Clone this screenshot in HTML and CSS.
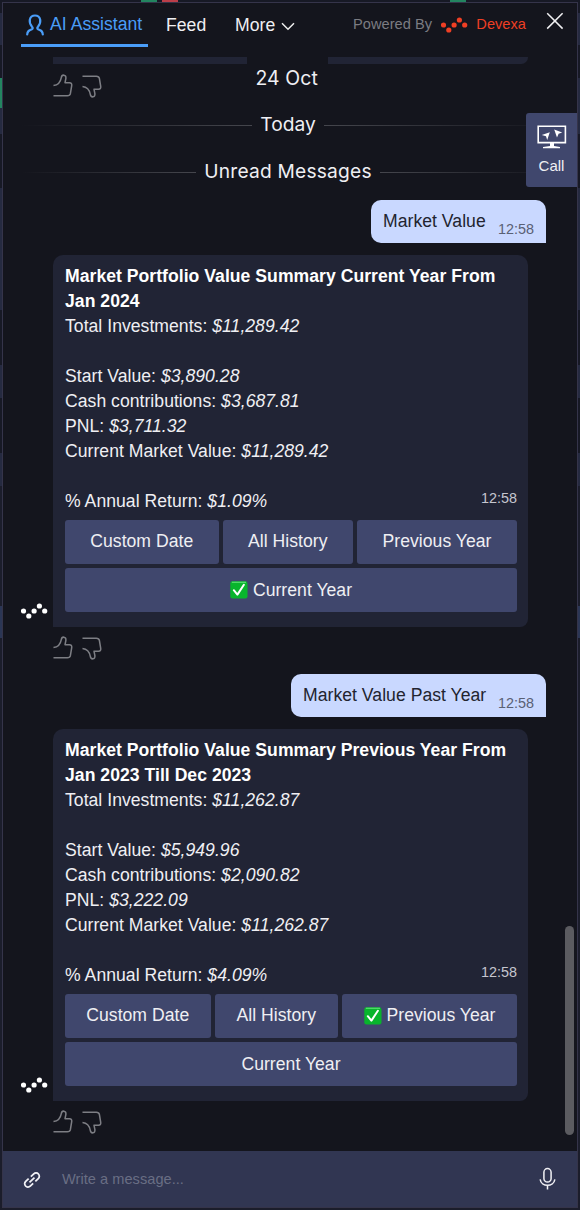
FILE: index.html
```html
<!DOCTYPE html>
<html lang="en">
<head>
<meta charset="utf-8">
<title>AI Assistant</title>
<link rel="stylesheet" href="styles.css">
</head>
<body>
<svg class="symbols" width="0" height="0">
  <symbol id="dots" viewBox="0 0 27 16"><circle cx="2.5" cy="8" r="2.6"/><circle cx="7.8" cy="13" r="2.6"/><circle cx="13.1" cy="8" r="2.6"/><circle cx="18.4" cy="3" r="2.6"/><circle cx="23.7" cy="8" r="2.6"/></symbol>
  <symbol id="thumb" viewBox="0 0 22 26"><path d="M.5 12.5C6 12 8 8 8.7 4.2C9.2.5 14 .8 13.5 5L12.6 9.5H17.3Q20 9.6 19.6 12.5L18.2 21Q17.7 23.3 15 23.3H.5"/></symbol>
  <symbol id="check" viewBox="0 0 18 18"><rect x=".3" y=".3" width="17.2" height="17.2" rx="2.2" fill="#08b52c"/><path d="M1.8 1.3H16" stroke="#58dc70" stroke-width="1.2"/><path d="M3.8 9.2L7.4 13.6L13.9 3.8" fill="none" stroke="#fff" stroke-width="2" stroke-linecap="round" stroke-linejoin="round"/></symbol>
</svg>
<div class="desktop">
  <div class="chips"><i class="up"></i><i class="down"></i><i class="up far"></i></div>
  <main class="window">
    <header class="header">
      <nav class="tabs">
        <a class="tab active"><svg class="person" viewBox="0 0 18 22"><path d="M1.2 20.5C1.2 17 3.3 16.2 6 15.2C7.1 14.8 6.8 13.6 6 12.7C2.2 8.2 3.1 1.5 9 1.5S15.8 8.2 12 12.7C11.2 13.6 10.9 14.8 12 15.2C14.7 16.2 16.8 17 16.8 20.5"/></svg><span>AI Assistant</span></a>
        <a class="tab feed">Feed</a>
        <a class="tab more">More<svg class="chevron" viewBox="0 0 14 9"><path d="M1 1.2L7 7.2L13 1.2"/></svg></a>
      </nav>
      <div class="powered"><span>Powered By</span><svg class="dots brand"><use href="#dots"/></svg><b>Devexa</b></div>
      <svg class="close" viewBox="0 0 18 18"><path d="M1.2 1.2L16.6 16.6M16.6 1.2L1.2 16.6"/></svg>
    </header>

    <section class="messages">
      <div class="previous"></div>
      <div class="date-row">
        <div class="votes"><svg><use href="#thumb"/></svg><svg class="dislike"><use href="#thumb"/></svg></div>
        <span class="date">24 Oct</span>
      </div>
      <div class="divider today"><span>Today</span></div>
      <div class="divider unread"><span>Unread Messages</span></div>

      <div class="bubble"><span>Market Value</span><time>12:58</time></div>
      <article class="reply">
        <svg class="dots avatar"><use href="#dots"/></svg>
        <div class="card">
          <h2>Market Portfolio Value Summary Current Year From<br>Jan 2024</h2>
          <p>Total Investments: <em>$11,289.42</em></p>
          <p class="gap">Start Value: <em>$3,890.28</em></p>
          <p>Cash contributions: <em>$3,687.81</em></p>
          <p>PNL: <em>$3,711.32</em></p>
          <p>Current Market Value: <em>$11,289.42</em></p>
          <p class="gap last"><span>% Annual Return: <em>$1.09%</em></span><time>12:58</time></p>
          <div class="buttons"><button>Custom Date</button><button>All History</button><button>Previous Year</button><button class="wide"><svg class="check"><use href="#check"/></svg>Current Year</button></div>
        </div>
      </article>
      <div class="votes below"><svg><use href="#thumb"/></svg><svg class="dislike"><use href="#thumb"/></svg></div>

      <div class="bubble second"><span>Market Value Past Year</span><time>12:58</time></div>
      <article class="reply">
        <svg class="dots avatar"><use href="#dots"/></svg>
        <div class="card">
          <h2>Market Portfolio Value Summary Previous Year From<br>Jan 2023 Till Dec 2023</h2>
          <p>Total Investments: <em>$11,262.87</em></p>
          <p class="gap">Start Value: <em>$5,949.96</em></p>
          <p>Cash contributions: <em>$2,090.82</em></p>
          <p>PNL: <em>$3,222.09</em></p>
          <p>Current Market Value: <em>$11,262.87</em></p>
          <p class="gap last"><span>% Annual Return: <em>$4.09%</em></span><time>12:58</time></p>
          <div class="buttons past"><button>Custom Date</button><button>All History</button><button><svg class="check"><use href="#check"/></svg>Previous Year</button><button class="wide">Current Year</button></div>
        </div>
      </article>
      <div class="votes below"><svg><use href="#thumb"/></svg><svg class="dislike"><use href="#thumb"/></svg></div>

      <aside class="call">
        <svg viewBox="0 0 30 24"><path d="M1.2 1.2H28.4V17.6H1.2Z" fill="none" stroke="#fff" stroke-width="1.6"/><path d="M13 18H17V21L23 22V23.2H6V22L13 21ZM4.8 10L12.8 7.3L10.2 15L9 11.3ZM17.2 4.6L25.2 7.6L21.6 8.8L20 12.6Z" fill="#fff"/></svg>
        <span>Call</span>
      </aside>
      <div class="scrollbar"></div>
    </section>

    <footer class="composer">
      <svg class="link" viewBox="0 0 18 18"><g transform="rotate(-43 9 9)"><path d="M7.5 5.7H3.5A3.3 3.3 0 0 0 3.5 12.3H7.5M10.5 5.7H14.5A3.3 3.3 0 0 1 14.5 12.3H10.5M5.6 9H12.4"/></g></svg>
      <span>Write a message...</span>
      <svg class="mic" viewBox="0 0 18 24"><rect x="5.2" y="1" width="7.6" height="14.3" rx="3.8"/><path d="M1.2 12.4C2.5 20.8 15.5 20.8 16.8 12.4M9 18.7V23"/></svg>
    </footer>
  </main>
</div>
</body>
</html>
```
FILE: styles.css
```css
* { box-sizing: border-box; }
body { margin: 0; background: #171925; font: 17.6px/25px "Liberation Sans", Arial, sans-serif; letter-spacing: .03px; color: #efeff3; }
.symbols { position: absolute; }
h2, p { margin: 0; font-size: inherit; }
svg { flex: none; overflow: visible; }
.desktop { width: 580px; height: 1210px; overflow: hidden; padding: 0 2px; background: linear-gradient(#171925 0 13px, #252a40 13px 45px, #171925 45px 78px, #252a40 78px 134px, #171925 134px 188px, #252a40 188px 310px, #171925 310px 365px, #252a40 365px 398px, #171925 398px 453px, #252a40 453px 486px, #1b1d2b 486px 606px, #2b3655 606px 638px, #1b1d2b 638px); }
.desktop { background-image: linear-gradient(90deg, #238560 2px, transparent 2px), linear-gradient(#171925 0 13px, #252a40 13px 45px, #171925 45px 78px, #252a40 78px 134px, #171925 134px 188px, #252a40 188px 310px, #171925 310px 365px, #252a40 365px 398px, #171925 398px 453px, #252a40 453px 486px, #1b1d2b 486px 606px, #2b3655 606px 638px, #1b1d2b 638px); background-size: 580px 30px, auto; background-position: 0 78px, 0 0; background-repeat: no-repeat; }
.chips { display: flex; height: 2px; padding-left: 139px; gap: 5px; }
.chips i { width: 16px; height: 2px; }
.up { background: #238560; }
.down { background: #bb3e49; }
.far { margin-left: 267px; }
.window { display: flex; flex-direction: column; height: 1206px; border: 1px solid #35344a; background: #14151d; }
.header { display: flex; height: 54px; flex: none; padding-left: 18px; }
.tabs { display: flex; }
.tab { white-space: nowrap; height: 44px; padding-top: 10px; }
.active { display: flex; width: 127px; padding: 9px 0 0 5px; color: #4a9df8; border-bottom: 3px solid #4a9df8; }
.person { width: 18px; height: 22px; margin: 2px 6px 0 0; fill: none; stroke: #4a9df8; stroke-width: 2.2; stroke-linecap: round; }
.feed { margin-left: 18px; width: 69px; }
.chevron { width: 14px; height: 9px; margin-left: 6px; fill: none; stroke: #eee; stroke-width: 1.5; }
.powered { display: flex; justify-content: space-between; width: 173px; margin-left: auto; padding-top: 9px; font-size: 14.6px; color: #7b7c82; white-space: nowrap; }
.powered b { font-weight: 400; color: #ef3f24; }
.dots { width: 27px; height: 16px; }
.brand { margin-top: 5px; fill: #ef3f24; }
.close { width: 18px; height: 18px; margin: 9px 13px 0 20px; fill: none; stroke: #f0f0f2; stroke-width: 1.5; }
.messages { position: relative; height: 1094px; flex: none; padding-left: 18px; }
.previous { height: 7px; width: 475px; margin-left: 32px; border-radius: 0 0 8px; background: linear-gradient(90deg, #212435 194px, transparent 194px 275px, #212435 275px); }
.date-row { display: flex; height: 38px; margin-left: 32px; }
.date { width: 80px; margin-left: 152.5px; font: 19.4px/28px Inter, sans-serif; letter-spacing: .1px; }
.votes { display: flex; gap: 8px; height: 26px; }
.date-row .votes { width: 50px; padding-top: 9px; }
.votes svg { width: 21px; height: 26px; fill: none; stroke: #7d7e84; stroke-width: 1.6; stroke-linejoin: round; }
.votes .dislike { transform: scaleY(-1); }
.divider { display: flex; align-items: center; width: 534px; height: 47px; gap: 8px; font: 19.2px/28px Inter, sans-serif; white-space: nowrap; }
.divider span { margin-bottom: 4px; }
.unread { letter-spacing: .2px; }
.divider::before, .divider::after { content: ""; flex: 1; height: 1px; background: linear-gradient(90deg, transparent, #45464d); }
.divider::after { background: linear-gradient(90deg, #45464d, transparent); }
.bubble { display: flex; justify-content: space-between; width: 175px; height: 43px; margin: 4px 0 0 350px; padding: 9px 12px 0; border-radius: 10px 10px 0; color: #22242f; background: #c9d8ff; white-space: nowrap; }
.bubble time { padding-top: 8px; font-size: 14.4px; letter-spacing: 0; color: #596074; }
.second { width: 255px; margin: 13px 0 0 270px; }
.reply { display: flex; margin-top: 12px; align-items: flex-end; }
.avatar { margin: 0 5px 8px 0; fill: #fff; }
.card { width: 475px; height: 372px; padding: 9px 11px 0 12px; border-radius: 10px 10px 8px 0; background: #212435; white-space: nowrap; }
.card h2 { font-weight: 700; color: #fff; }
.gap { margin-top: 25px; }
.last { display: flex; justify-content: space-between; }
.last time { margin-top: -3px; font-size: 14.4px; letter-spacing: 0; color: #c5c6cf; }
.buttons { display: grid; grid-template-columns: 153.5px 129.5px 1fr; gap: 4.5px; margin-top: 5.5px; }
.past { grid-template-columns: 145.5px 122.5px 1fr; }
button { display: flex; align-items: center; justify-content: center; height: 44px; padding: 0; border: 0; border-radius: 3px; background: #40476d; color: inherit; font: inherit; letter-spacing: inherit; white-space: nowrap; }
.wide { grid-column: 1 / -1; }
.check { width: 18px; height: 18px; margin-right: 5px; }
.below { margin: 8px 0 0 32px; }
.call { position: absolute; left: 523px; top: 56px; display: flex; flex-direction: column; align-items: center; width: 51px; height: 74px; padding-top: 12px; border-radius: 3px 0 0 3px; background: #40476d; font-size: 15px; line-height: 24px; }
.call svg { width: 30px; height: 24px; margin-bottom: 5px; }
.scrollbar { position: absolute; left: 562px; top: 869px; width: 9px; height: 209px; border-radius: 5px; background: #5b5b60; }
.composer { display: flex; height: 56px; flex: none; padding-left: 20px; background: #313652; }
.link { width: 18px; height: 18px; margin: 20px 21px 0 0; fill: none; stroke: #f1f1f5; stroke-width: 1.8; }
.composer span { width: 477px; padding-top: 16px; font-size: 14.6px; color: #696e84; }
.mic { width: 17px; height: 24px; margin-top: 16px; fill: none; stroke: #f1f1f5; stroke-width: 1.6; }
```
